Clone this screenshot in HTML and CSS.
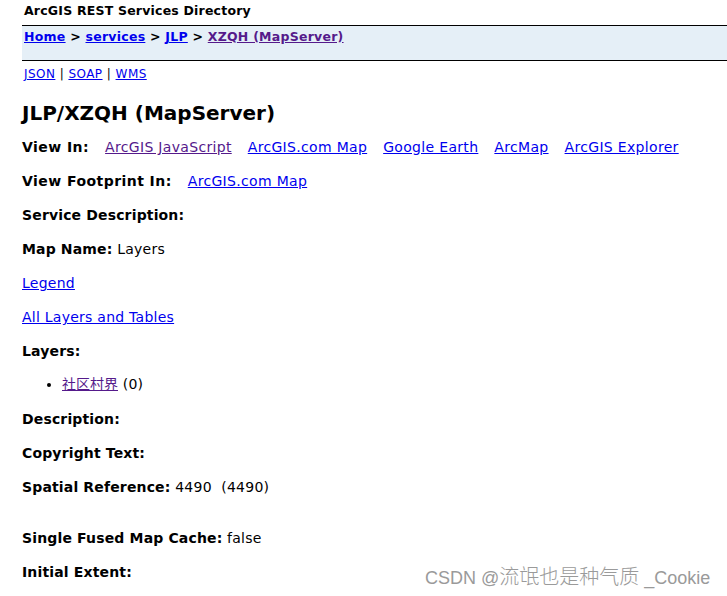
FILE: index.html
```html
<!DOCTYPE html>
<html>
<head>
<meta charset="utf-8">
<title>JLP/XZQH (MapServer)</title>
<link rel="stylesheet" href="styles.css">
</head>
<body>
<div class="title">ArcGIS REST Services Directory</div>
<div class="crumbs"><a href="#" class="link">Home</a> &gt; <a href="#" class="link">services</a> &gt; <a href="#" class="link">JLP</a> &gt; <a href="#" class="visited">XZQH (MapServer)</a></div>
<div class="api"><a href="#" class="link">JSON</a> | <a href="#" class="link">SOAP</a> | <a href="#" class="link">WMS</a></div>
<div class="content">
  <h2 class="heading">JLP/XZQH (MapServer)</h2>
  <div class="rows">
    <div class="row links"><b class="wide">View In:</b><a href="#" class="visited">ArcGIS JavaScript</a><a href="#" class="link">ArcGIS.com Map</a><a href="#" class="link">Google Earth</a><a href="#" class="link">ArcMap</a><a href="#" class="link">ArcGIS Explorer</a></div>
    <div class="row links"><b class="wide">View Footprint In:</b><a href="#" class="link">ArcGIS.com Map</a></div>
    <div class="row"><b>Service Description:</b></div>
    <div class="row"><b>Map Name:</b> Layers</div>
    <div class="row"><a href="#" class="link">Legend</a></div>
    <div class="row"><a href="#" class="link">All Layers and Tables</a></div>
    <div class="row"><b>Layers:</b></div>
    <ul class="layers"><li><a href="#" class="visited cjk">社区村界</a> (0)</li></ul>
    <div class="row"><b>Description:</b></div>
    <div class="row"><b>Copyright Text:</b></div>
    <div class="row pre"><b>Spatial Reference:</b> 4490  (4490)</div>
    <div class="row gap"><b>Single Fused Map Cache:</b> false</div>
    <div class="row"><b>Initial Extent:</b></div>
  </div>
</div>
<div class="watermark">CSDN @<span class="wm-cjk">流氓也是种气质</span> _Cookie</div>
</body>
</html>
```
FILE: styles.css
```css
html, body {
  margin: 0;
  padding: 0;
  background: #fff;
  color: #000;
  font-family: "DejaVu Sans", Verdana, "Noto Sans CJK SC", sans-serif;
  font-size: 14px;
  letter-spacing: 0.25px;
}
body {
  position: relative;
  height: 596px;
  overflow: hidden;
}
b { letter-spacing: 0.15px; }
b.wide { letter-spacing: 0.45px; }
.link { color: #0000ee; }
.visited { color: #551a8b; }
.links a { letter-spacing: 0.32px; }
.title {
  font-weight: bold;
  font-size: 12.5px;
  letter-spacing: 0.2px;
  line-height: 15px;
  padding: 3px 0 0 24px;
  height: 22px;
}
.crumbs {
  margin-left: 22px;
  border-top: 1px solid #000;
  border-bottom: 1px solid #000;
  background: #e5eff7;
  padding: 3px 0 0 2px;
  height: 31px;
  font-weight: bold;
  font-size: 12.5px;
  letter-spacing: 0.25px;
  line-height: 15px;
}
.api {
  font-size: 12px;
  letter-spacing: 0.45px;
  line-height: 14px;
  padding: 6px 0 0 24px;
  height: 20px;
}
.content {
  padding-left: 22px;
}
.heading {
  font-size: 20px;
  letter-spacing: 0;
  line-height: 24px;
  margin: 14px 0 0 0;
}
.rows {
  display: flex;
  flex-direction: column;
  margin-top: 6px;
}
.row {
  line-height: 17px;
  padding: 8px 0 9px;
}
.links {
  display: flex;
  gap: 16px;
}
.pre { white-space: pre; }
.gap { margin-top: 17px; }
.layers {
  margin: 0;
  padding: 6px 0 10px 40px;
  line-height: 17px;
}
.cjk { font-family: "Noto Sans CJK SC", sans-serif; letter-spacing: 0; }
.watermark {
  position: absolute;
  left: 425px;
  top: 565px;
  font-family: "Liberation Sans", "Noto Sans CJK SC", sans-serif;
  font-size: 18px;
  letter-spacing: 0;
  line-height: 22px;
  color: #9a9a9a;
  white-space: nowrap;
}
.wm-cjk {
  font-family: "Noto Sans CJK SC", sans-serif;
  font-size: 20px;
  font-weight: 300;
}
```
